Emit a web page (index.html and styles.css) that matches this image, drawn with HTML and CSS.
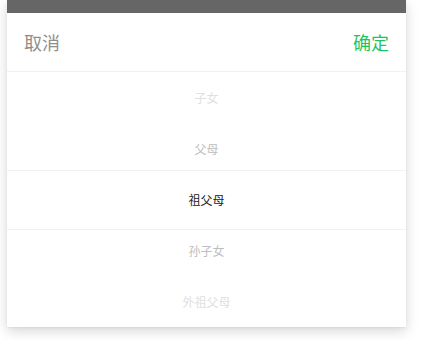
FILE: index.html
```html
<!DOCTYPE html>
<html lang="zh">
<head>
<meta charset="utf-8">
<link rel="stylesheet" href="styles.css">
</head>
<body>
<div class="sheet">
  <div class="topband"></div>
  <div class="toolbar">
    <span class="cancel">取消</span>
    <span class="confirm">确定</span>
  </div>
  <div class="picker">
    <div class="indicator"></div>
    <div class="item far">子女</div>
    <div class="item near">父母</div>
    <div class="item sel">祖父母</div>
    <div class="item near">孙子女</div>
    <div class="item far">外祖父母</div>
  </div>
</div>
</body>
</html>
```
FILE: styles.css
```css
html, body {
  margin: 0;
  padding: 0;
  background: #fff;
  font-family: "Noto Sans CJK SC", "Noto Sans", sans-serif;
}
body {
  padding-bottom: 13px;
}
.sheet {
  width: 399px;
  margin-left: 7px;
  background: #fff;
  box-shadow: 0 4px 12px rgba(0, 0, 0, 0.16), 0 1px 2px rgba(0, 0, 0, 0.06);
}
.topband {
  height: 13px;
  background: #666;
}
.toolbar {
  height: 58px;
  display: flex;
  align-items: center;
  justify-content: space-between;
  padding: 0 17px;
  border-bottom: 1px solid #f2f2f2;
  font-size: 18px;
}
.cancel { color: #8f8f8f; }
.confirm { color: #1cc65f; }
.picker {
  position: relative;
  display: flex;
  flex-direction: column;
}
.indicator {
  position: absolute;
  left: 0;
  right: 0;
  top: 98px;
  height: 58px;
  border-top: 1px solid #f2f2f2;
  border-bottom: 1px solid #f2f2f2;
}
.item {
  height: 51px;
  display: flex;
  align-items: center;
  justify-content: center;
  font-size: 12px;
}
.far { color: #e0e0e0; }
.near { color: #bdbdbd; }
.sel { color: #222; }
```
